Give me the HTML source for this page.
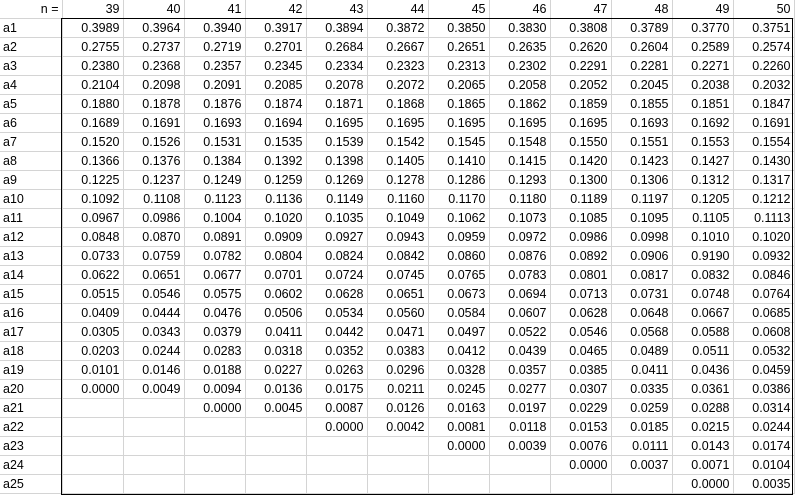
<!DOCTYPE html>
<html><head><style>
body{margin:0;background:#fff;width:795px;height:496px;overflow:hidden;position:relative;font-family:"Liberation Sans",Arial,sans-serif;font-size:12.5px;color:#000}
table{border-collapse:collapse;table-layout:fixed;position:absolute;left:0;top:0}
td{height:18px;line-height:18px;padding:0 3px 0 0;border-right:1px solid #d4d4d4;border-bottom:1px solid #d4d4d4;text-align:right;white-space:nowrap;overflow:hidden}
td:first-child{text-align:left;padding-left:3px}
tr:first-child td:first-child{text-align:right}
#box{position:absolute;left:61px;top:18px;width:730px;height:475px;border:1px solid #000}
</style></head><body>
<table>
<colgroup><col style="width:62px"><col style="width:61px"><col style="width:61px"><col style="width:61px"><col style="width:61px"><col style="width:61px"><col style="width:61px"><col style="width:61px"><col style="width:61px"><col style="width:61px"><col style="width:61px"><col style="width:61px"><col style="width:61px"></colgroup>
<tr><td>n =</td><td>39</td><td>40</td><td>41</td><td>42</td><td>43</td><td>44</td><td>45</td><td>46</td><td>47</td><td>48</td><td>49</td><td>50</td></tr>
<tr><td>a1</td><td>0.3989</td><td>0.3964</td><td>0.3940</td><td>0.3917</td><td>0.3894</td><td>0.3872</td><td>0.3850</td><td>0.3830</td><td>0.3808</td><td>0.3789</td><td>0.3770</td><td>0.3751</td></tr>
<tr><td>a2</td><td>0.2755</td><td>0.2737</td><td>0.2719</td><td>0.2701</td><td>0.2684</td><td>0.2667</td><td>0.2651</td><td>0.2635</td><td>0.2620</td><td>0.2604</td><td>0.2589</td><td>0.2574</td></tr>
<tr><td>a3</td><td>0.2380</td><td>0.2368</td><td>0.2357</td><td>0.2345</td><td>0.2334</td><td>0.2323</td><td>0.2313</td><td>0.2302</td><td>0.2291</td><td>0.2281</td><td>0.2271</td><td>0.2260</td></tr>
<tr><td>a4</td><td>0.2104</td><td>0.2098</td><td>0.2091</td><td>0.2085</td><td>0.2078</td><td>0.2072</td><td>0.2065</td><td>0.2058</td><td>0.2052</td><td>0.2045</td><td>0.2038</td><td>0.2032</td></tr>
<tr><td>a5</td><td>0.1880</td><td>0.1878</td><td>0.1876</td><td>0.1874</td><td>0.1871</td><td>0.1868</td><td>0.1865</td><td>0.1862</td><td>0.1859</td><td>0.1855</td><td>0.1851</td><td>0.1847</td></tr>
<tr><td>a6</td><td>0.1689</td><td>0.1691</td><td>0.1693</td><td>0.1694</td><td>0.1695</td><td>0.1695</td><td>0.1695</td><td>0.1695</td><td>0.1695</td><td>0.1693</td><td>0.1692</td><td>0.1691</td></tr>
<tr><td>a7</td><td>0.1520</td><td>0.1526</td><td>0.1531</td><td>0.1535</td><td>0.1539</td><td>0.1542</td><td>0.1545</td><td>0.1548</td><td>0.1550</td><td>0.1551</td><td>0.1553</td><td>0.1554</td></tr>
<tr><td>a8</td><td>0.1366</td><td>0.1376</td><td>0.1384</td><td>0.1392</td><td>0.1398</td><td>0.1405</td><td>0.1410</td><td>0.1415</td><td>0.1420</td><td>0.1423</td><td>0.1427</td><td>0.1430</td></tr>
<tr><td>a9</td><td>0.1225</td><td>0.1237</td><td>0.1249</td><td>0.1259</td><td>0.1269</td><td>0.1278</td><td>0.1286</td><td>0.1293</td><td>0.1300</td><td>0.1306</td><td>0.1312</td><td>0.1317</td></tr>
<tr><td>a10</td><td>0.1092</td><td>0.1108</td><td>0.1123</td><td>0.1136</td><td>0.1149</td><td>0.1160</td><td>0.1170</td><td>0.1180</td><td>0.1189</td><td>0.1197</td><td>0.1205</td><td>0.1212</td></tr>
<tr><td>a11</td><td>0.0967</td><td>0.0986</td><td>0.1004</td><td>0.1020</td><td>0.1035</td><td>0.1049</td><td>0.1062</td><td>0.1073</td><td>0.1085</td><td>0.1095</td><td>0.1105</td><td>0.1113</td></tr>
<tr><td>a12</td><td>0.0848</td><td>0.0870</td><td>0.0891</td><td>0.0909</td><td>0.0927</td><td>0.0943</td><td>0.0959</td><td>0.0972</td><td>0.0986</td><td>0.0998</td><td>0.1010</td><td>0.1020</td></tr>
<tr><td>a13</td><td>0.0733</td><td>0.0759</td><td>0.0782</td><td>0.0804</td><td>0.0824</td><td>0.0842</td><td>0.0860</td><td>0.0876</td><td>0.0892</td><td>0.0906</td><td>0.9190</td><td>0.0932</td></tr>
<tr><td>a14</td><td>0.0622</td><td>0.0651</td><td>0.0677</td><td>0.0701</td><td>0.0724</td><td>0.0745</td><td>0.0765</td><td>0.0783</td><td>0.0801</td><td>0.0817</td><td>0.0832</td><td>0.0846</td></tr>
<tr><td>a15</td><td>0.0515</td><td>0.0546</td><td>0.0575</td><td>0.0602</td><td>0.0628</td><td>0.0651</td><td>0.0673</td><td>0.0694</td><td>0.0713</td><td>0.0731</td><td>0.0748</td><td>0.0764</td></tr>
<tr><td>a16</td><td>0.0409</td><td>0.0444</td><td>0.0476</td><td>0.0506</td><td>0.0534</td><td>0.0560</td><td>0.0584</td><td>0.0607</td><td>0.0628</td><td>0.0648</td><td>0.0667</td><td>0.0685</td></tr>
<tr><td>a17</td><td>0.0305</td><td>0.0343</td><td>0.0379</td><td>0.0411</td><td>0.0442</td><td>0.0471</td><td>0.0497</td><td>0.0522</td><td>0.0546</td><td>0.0568</td><td>0.0588</td><td>0.0608</td></tr>
<tr><td>a18</td><td>0.0203</td><td>0.0244</td><td>0.0283</td><td>0.0318</td><td>0.0352</td><td>0.0383</td><td>0.0412</td><td>0.0439</td><td>0.0465</td><td>0.0489</td><td>0.0511</td><td>0.0532</td></tr>
<tr><td>a19</td><td>0.0101</td><td>0.0146</td><td>0.0188</td><td>0.0227</td><td>0.0263</td><td>0.0296</td><td>0.0328</td><td>0.0357</td><td>0.0385</td><td>0.0411</td><td>0.0436</td><td>0.0459</td></tr>
<tr><td>a20</td><td>0.0000</td><td>0.0049</td><td>0.0094</td><td>0.0136</td><td>0.0175</td><td>0.0211</td><td>0.0245</td><td>0.0277</td><td>0.0307</td><td>0.0335</td><td>0.0361</td><td>0.0386</td></tr>
<tr><td>a21</td><td></td><td></td><td>0.0000</td><td>0.0045</td><td>0.0087</td><td>0.0126</td><td>0.0163</td><td>0.0197</td><td>0.0229</td><td>0.0259</td><td>0.0288</td><td>0.0314</td></tr>
<tr><td>a22</td><td></td><td></td><td></td><td></td><td>0.0000</td><td>0.0042</td><td>0.0081</td><td>0.0118</td><td>0.0153</td><td>0.0185</td><td>0.0215</td><td>0.0244</td></tr>
<tr><td>a23</td><td></td><td></td><td></td><td></td><td></td><td></td><td>0.0000</td><td>0.0039</td><td>0.0076</td><td>0.0111</td><td>0.0143</td><td>0.0174</td></tr>
<tr><td>a24</td><td></td><td></td><td></td><td></td><td></td><td></td><td></td><td></td><td>0.0000</td><td>0.0037</td><td>0.0071</td><td>0.0104</td></tr>
<tr><td>a25</td><td></td><td></td><td></td><td></td><td></td><td></td><td></td><td></td><td></td><td></td><td>0.0000</td><td>0.0035</td></tr>
</table>
<div id="box"></div>
</body></html>
